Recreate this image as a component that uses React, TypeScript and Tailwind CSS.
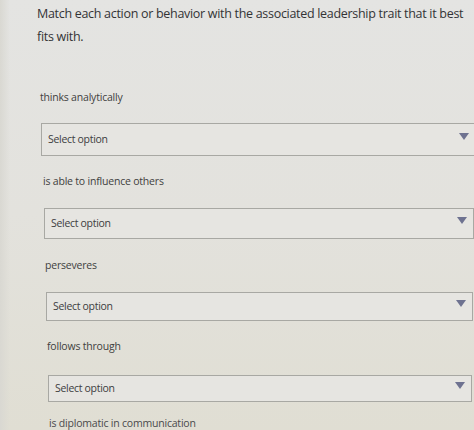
const rows = [
  {
    label: 'thinks analytically',
    labelCls: 'ml-[40px] h-[24px]',
    selectCls: 'ml-[41px] mr-[-2px] mt-[13px] h-[33px]',
    after: 'h-[14px]',
  },
  {
    label: 'is able to influence others',
    labelCls: 'ml-[43px] h-[24px]',
    selectCls: 'ml-[44px] mr-[0px] mt-[14px] h-[31px]',
    after: 'h-[15px]',
  },
  {
    label: 'perseveres',
    labelCls: 'ml-[45px] h-[24px]',
    selectCls: 'ml-[46px] mr-[1px] mt-[14px] h-[29px]',
    after: 'h-[14px]',
  },
  {
    label: 'follows through',
    labelCls: 'ml-[47px] h-[24px]',
    selectCls: 'ml-[48px] mr-[2px] mt-[16px] h-[27px]',
    after: 'h-[12px]',
  },
];

function SelectBox({ className }: { className: string }) {
  return (
    <div
      className={`flex items-center justify-between border border-[#a8a8a3] bg-[#e6e5e1] pl-[6px] pr-[6px] ${className}`}
    >
      <span className="text-[10.5px] tracking-[-0.3px] text-[#3d3d3f]">Select option</span>
      <svg width="10" height="7" viewBox="0 0 10 7" className="mb-[6px]">
        <polygon points="0,0 10,0 5,7" fill="#6e7290" />
      </svg>
    </div>
  );
}

export default function App() {
  return (
    <div
      className="h-[430px] w-[474px] overflow-hidden bg-gradient-to-b from-[#e4e4e2] via-[#e3e2dd] to-[#e0ded3] text-[#3a3a3a]"
      style={{ fontFamily: '"Open Sans", "Noto Sans", sans-serif' }}
    >
      <div className="flex h-full">
        <div className="w-[10px] shrink-0 bg-gradient-to-r from-[#d9d8d2] to-transparent" />
        <div className="-ml-[10px] flex-1">
          <p className="whitespace-nowrap pl-[37px] pt-[2px] text-[12.5px] leading-[23px] tracking-[-0.3px] text-[#333335]">
            Match each action or behavior with the associated leadership trait that it best
            <br />
            fits with.
          </p>

          <div className="mt-[38px] flex flex-col">
            {rows.map((r) => (
              <div key={r.label} className="flex flex-col">
                <div
                  className={`flex items-center text-[10.5px] tracking-[-0.2px] text-[#3f3f40] ${r.labelCls}`}
                >
                  {r.label}
                </div>
                <SelectBox className={r.selectCls} />
                <div className={r.after} />
              </div>
            ))}
            <div className="ml-[49px] flex h-[20px] items-center text-[10.5px] tracking-[-0.2px] text-[#4a4a4c]">
              is diplomatic in communication
            </div>
          </div>
        </div>
      </div>
    </div>
  );
}
